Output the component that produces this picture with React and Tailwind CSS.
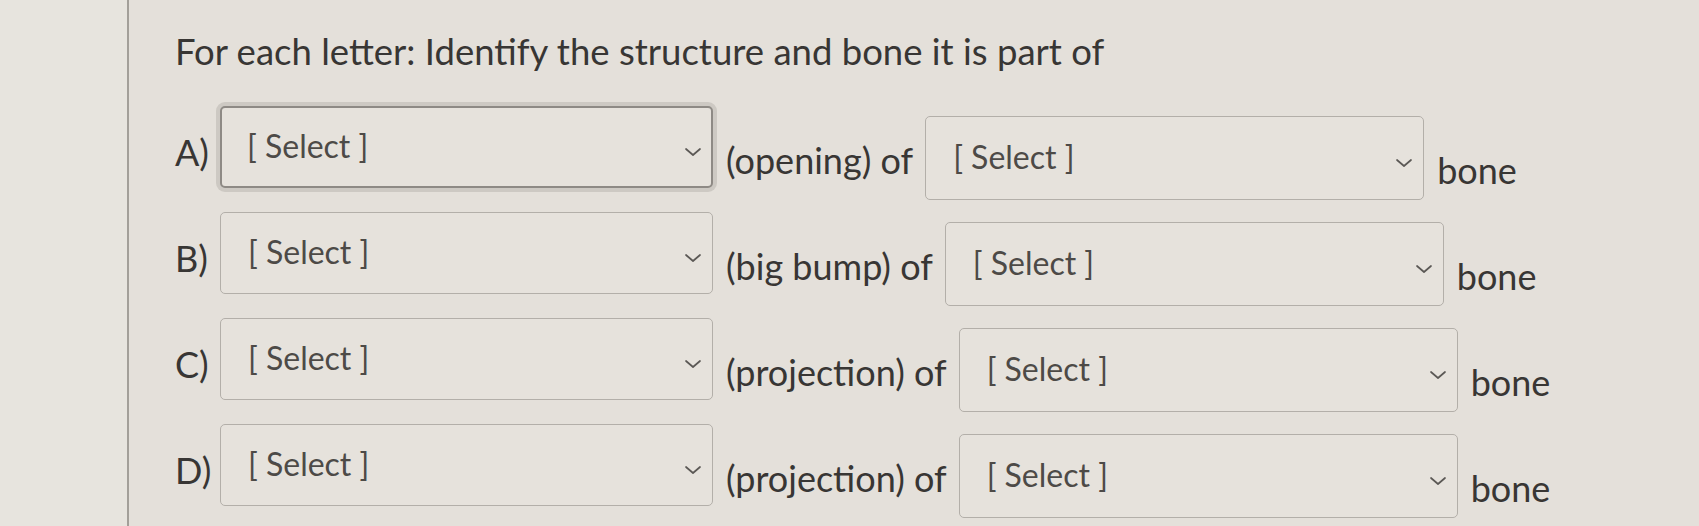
import React from 'react'

const rows = [
  { letter: 'A)', part: '(opening) of', focused: true },
  { letter: 'B)', part: '(big bump) of' },
  { letter: 'C)', part: '(projection) of' },
  { letter: 'D)', part: '(projection) of' },
]

function Chevron() {
  return (
    <svg width="20" height="12" viewBox="0 0 20 12" className="mt-[9px] shrink-0">
      <path d="M3 3 L10 9 L17 3" fill="none" stroke="#5b5855" strokeWidth="1.7" strokeLinecap="round" strokeLinejoin="round" />
    </svg>
  )
}

function FakeSelect({ width, height, focused }) {
  return (
    <div
      className={
        focused
          ? 'flex items-center justify-between rounded-[5px] border-[2px] border-[#8e8a85] bg-[#e6e2dc] pl-[25px] pr-[8px] ring-[4px] ring-[#cdc9c3]'
          : 'flex items-center justify-between rounded-[5px] border border-[#b3afa9] bg-[#e6e2dc] pl-[27px] pr-[9px]'
      }
      style={{ width, height }}
    >
      <span className="mb-[2px] text-[32px] leading-[38px] text-[#4d4a47]">[ Select ]</span>
      <Chevron />
    </div>
  )
}

export default function App() {
  return (
    <div className="flex h-[526px] w-full overflow-hidden bg-[#e4e0da] font-['Lato','Open_Sans',sans-serif]">
      <div className="w-[129px] shrink-0 border-r-2 border-[#a39f99] bg-[#e7e4de]" />
      <div className="pl-[46px] pt-[30px]">
        <h1 className="text-[36.5px] leading-[43px] text-[#383634]">
          For each letter: Identify the structure and bone it is part of
        </h1>

        <div className="mt-[33px] flex flex-col gap-[12px]">
          {rows.map((r) => (
            <div key={r.letter} className="flex items-start">
              <span className="mt-[25px] w-[45px] shrink-0 text-[36px] leading-[43px] text-[#383634]">
                {r.letter}
              </span>
              <FakeSelect width={493} height={82} focused={r.focused} />
              <span className="ml-[13px] mt-[33px] text-[36px] leading-[43px] text-[#383634]">
                {r.part}
              </span>
              <div className="ml-[12px] mt-[10px]">
                <FakeSelect width={499} height={84} />
              </div>
              <span className="ml-[13px] mt-[43px] text-[36px] leading-[43px] text-[#383634]">
                bone
              </span>
            </div>
          ))}
        </div>
      </div>
    </div>
  )
}
